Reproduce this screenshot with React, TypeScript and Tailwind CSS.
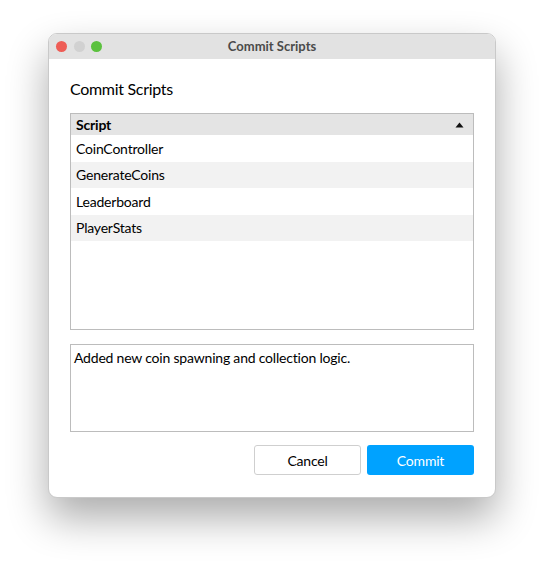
import React from 'react';

const scripts = ['CoinController', 'GenerateCoins', 'Leaderboard', 'PlayerStats'];

export default function App() {
  return (
    <div
      className="min-h-[562px] w-full bg-white pl-[48px] pt-[33px]"
      style={{ fontFamily: '"Lato", "Open Sans", sans-serif' }}
    >
      <div className="flex w-[448px] flex-col overflow-hidden rounded-[9px] border border-[#c9c9c9] bg-white shadow-[0_20px_40px_rgba(0,0,0,0.33)]">
        {/* title bar */}
        <div className="relative flex h-[25px] items-center justify-center bg-[#e2e2e2]">
          <div className="absolute left-[7px] top-[7px] flex gap-[6.5px]">
            <span className="h-[11px] w-[11px] rounded-full bg-[#ee5d56]" />
            <span className="h-[11px] w-[11px] rounded-full bg-[#d1d1d1]" />
            <span className="h-[11px] w-[11px] rounded-full bg-[#5bc13e]" />
          </div>
          <span className="text-[13px] font-bold text-[#4b4b4b]">Commit Scripts</span>
        </div>

        <div className="flex flex-col px-[21px] pb-[22px] tracking-[-0.2px]">
          <h1 className="mt-[20px] text-[16px] leading-[20px] tracking-[-0.3px] text-black">Commit Scripts</h1>

          {/* list */}
          <div className="mt-[14px] h-[217px] border border-[#bcbcbc] bg-white">
            <div className="flex h-[21px] items-center justify-between bg-[#e4e4e4] pl-[5px] pr-[9px]">
              <span className="text-[14px] font-bold text-black">Script</span>
              <svg width="9" height="6" viewBox="0 0 9 6" aria-hidden>
                <path d="M4.5 0.5 L8.5 5.5 L0.5 5.5 Z" fill="#111" />
              </svg>
            </div>
            {scripts.map((s, i) => (
              <div
                key={s}
                className={`flex h-[26.5px] items-center pl-[5px] text-[14px] text-black ${
                  i % 2 === 1 ? 'bg-[#f2f2f2]' : 'bg-white'
                }`}
              >
                {s}
              </div>
            ))}
          </div>

          {/* commit message */}
          <div className="mt-[14px] h-[88px] border border-[#bcbcbc] px-[3px] pt-[3px] text-[14px] leading-[20px] text-black">
            Added new coin spawning and collection logic.
          </div>

          <div className="mt-[13px] flex justify-end gap-[6px]">
            <button
              type="button"
              className="h-[30px] w-[107px] rounded-[3px] border border-[#cfcfcf] bg-white text-[14px] text-black"
            >
              Cancel
            </button>
            <button
              type="button"
              className="h-[30px] w-[107px] rounded-[3px] bg-[#00a2ff] text-[14px] text-white"
            >
              Commit
            </button>
          </div>
        </div>
      </div>
    </div>
  );
}
